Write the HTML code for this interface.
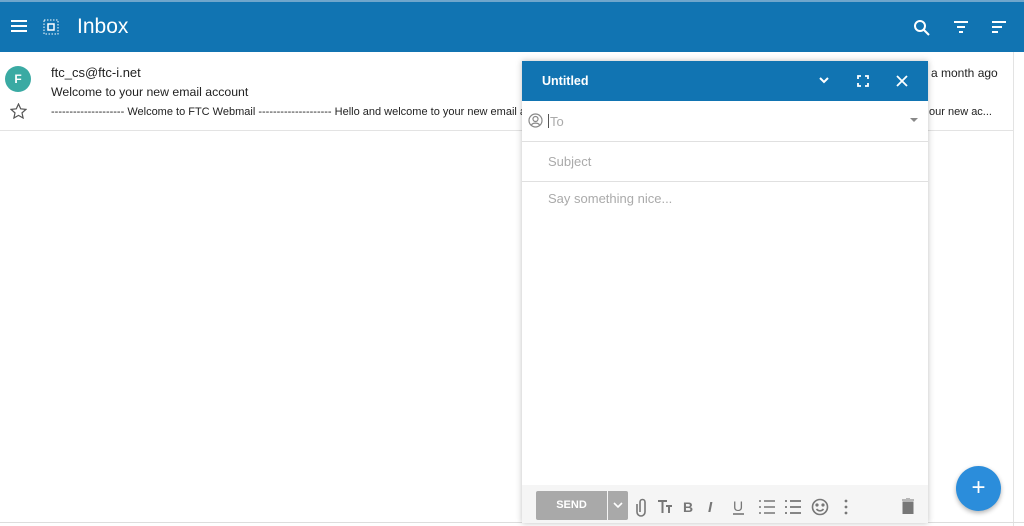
<!DOCTYPE html>
<html><head><style>
*{box-sizing:border-box;margin:0;padding:0}
body{width:1024px;height:526px;overflow:hidden;background:#fff;font-family:"Liberation Sans",sans-serif;position:relative}
.top{position:absolute;left:0;top:0;width:1024px;height:52px;background:#1174b2;border-top:2px solid #6fa6cc}
.abs{position:absolute}
.t{color:#222}
</style></head><body>
<div class="top">
 <svg class="abs" style="left:10px;top:17px" width="18" height="14"><path d="M1 2h16M1 7h16M1 12h16" stroke="#fff" stroke-width="2"/></svg>
 <svg class="abs" style="left:43px;top:17px" width="16" height="16"><rect x="1" y="1" width="14" height="14" fill="none" stroke="#fff" stroke-dasharray="1.5 1.5"/><rect x="5" y="5" width="6" height="6" fill="none" stroke="#fff" stroke-width="1.5"/></svg>
 <div class="abs" style="left:77px;top:13px;color:#fff;font-size:21px">Inbox</div>
 <svg class="abs" style="left:913px;top:17px" width="18" height="18"><circle cx="7" cy="7" r="5" fill="none" stroke="#fff" stroke-width="2"/><path d="M11 11l5 5" stroke="#fff" stroke-width="2"/></svg>
 <svg class="abs" style="left:953px;top:19px" width="16" height="12"><path d="M1 1h14M4 6h8M6 11h4" stroke="#fff" stroke-width="2"/></svg>
 <svg class="abs" style="left:991px;top:19px" width="16" height="12"><path d="M1 1h14M1 6h10M1 11h6" stroke="#fff" stroke-width="2"/></svg>
</div>
<div class="abs" style="left:5px;top:66px;width:26px;height:26px;border-radius:50%;background:#3aaaa3;color:#fff;font-size:12px;font-weight:bold;text-align:center;line-height:26px">F</div>
<svg class="abs" style="left:10px;top:103px" width="17" height="16"><path d="M8.5 1l2.2 4.8 5.2.6-3.9 3.5 1.1 5.1-4.6-2.6-4.6 2.6 1.1-5.1L1.1 6.4l5.2-.6z" fill="none" stroke="#555" stroke-width="1.2"/></svg>
<div class="abs t" style="left:51px;top:65px;font-size:13px">ftc_cs@ftc-i.net</div>
<div class="abs t" style="left:51px;top:85px;font-size:12.3px">Welcome to your new email account</div>
<div class="abs t" style="left:51px;top:106px;font-size:11px;white-space:nowrap">-------------------- Welcome to FTC Webmail -------------------- Hello and welcome to your new email a</div>
<div class="abs t" style="left:931px;top:66px;font-size:12px">a month ago</div>
<div class="abs t" style="left:929px;top:106px;font-size:11px">our new ac...</div>
<div class="abs" style="left:0;top:130px;width:1013px;height:1px;background:#e3e3e3"></div>
<div class="abs" style="left:1013px;top:52px;width:1px;height:474px;background:#e3e3e3"></div>
<div class="abs" style="left:0;top:522px;width:1024px;height:1px;background:#ddd"></div>

<div class="abs" style="left:522px;top:61px;width:406px;height:462px;background:#fff;box-shadow:0 0 6px rgba(0,0,0,.25)">
 <div class="abs" style="left:0;top:0;width:406px;height:40px;background:#1174b2"></div>
 <div class="abs" style="left:20px;top:13px;color:#fff;font-size:12.5px;font-weight:bold">Untitled</div>
 <svg class="abs" style="left:296px;top:14px" width="12" height="10"><path d="M2 3l4 4 4-4" stroke="#fff" stroke-width="2" fill="none"/></svg>
 <svg class="abs" style="left:335px;top:14px" width="12" height="12"><path d="M1 4V1h3M8 1h3v3M11 8v3H8M4 11H1V8" stroke="#fff" stroke-width="1.8" fill="none"/></svg>
 <svg class="abs" style="left:374px;top:14px" width="12" height="12"><path d="M1 1l10 10M11 1L1 11" stroke="#fff" stroke-width="1.8"/></svg>
 <svg class="abs" style="left:6px;top:52px" width="15" height="15"><circle cx="7.5" cy="7.5" r="6.5" fill="none" stroke="#888" stroke-width="1.2"/><circle cx="7.5" cy="6" r="2.5" fill="none" stroke="#888" stroke-width="1.2"/><path d="M3.5 12c1-2.5 7-2.5 8 0" stroke="#888" stroke-width="1.2" fill="none"/></svg>
 <div class="abs" style="left:26px;top:53px;width:1px;height:14px;background:#555"></div>
 <div class="abs" style="left:28px;top:53px;color:#aaa;font-size:13px">To</div>
 <div class="abs" style="left:388px;top:57px;border:4px solid transparent;border-top:4px solid #888"></div>
 <div class="abs" style="left:0;top:80px;width:406px;height:1px;background:#e0e0e0"></div>
 <div class="abs" style="left:26px;top:93px;color:#aaa;font-size:13px">Subject</div>
 <div class="abs" style="left:0;top:120px;width:406px;height:1px;background:#e0e0e0"></div>
 <div class="abs" style="left:26px;top:130px;color:#aaa;font-size:13px">Say something nice...</div>
 <div class="abs" style="left:0;top:424px;width:406px;height:38px;background:#f5f5f5"></div>
 <div class="abs" style="left:14px;top:430px;width:71px;height:29px;background:#a9a9a9;color:#fff;font-size:11px;font-weight:bold;text-align:center;line-height:29px;border-radius:2px 0 0 2px">SEND</div>
 <div class="abs" style="left:86px;top:430px;width:20px;height:29px;background:#a9a9a9;border-radius:0 2px 2px 0"><svg style="position:absolute;left:5px;top:11px" width="10" height="7"><path d="M1 1l4 4 4-4" stroke="#fff" stroke-width="1.6" fill="none"/></svg></div>
 <svg class="abs" style="left:112px;top:436px" width="300" height="20" fill="none" stroke="#777" stroke-width="1.6">
  <path d="M6 15V5a2.5 2.5 0 0 1 5 0v10a4 4 0 0 1-8 0V7"/>
  <path d="M24 4h9M28.5 4v12M32 9h6M35 9v7" stroke-width="2"/>
  <text x="49" y="15" font-family="Liberation Sans" font-weight="bold" font-size="14" fill="#777" stroke="none">B</text>
  <text x="74" y="15" font-family="Liberation Sans" font-weight="bold" font-style="italic" font-size="15" fill="#777" stroke="none">I</text>
  <text x="99" y="14" font-family="Liberation Sans" font-size="14" fill="#777" stroke="none">U</text>
  <path d="M99 17h11"/>
  <path d="M130 4h11M130 10h11M130 16h11M125 4h2M125 10h2M125 16h2" stroke-width="1.4"/>
  <path d="M156 4h11M156 10h11M156 16h11M151 4h2M151 10h2M151 16h2" stroke-width="1.8"/>
  <circle cx="186" cy="10" r="7.5"/><circle cx="183" cy="8" r=".8" fill="#777"/><circle cx="189" cy="8" r=".8" fill="#777"/><path d="M182.5 12c2 2.5 5 2.5 7 0"/>
  <circle cx="212" cy="4" r="1.4" fill="#777" stroke="none"/><circle cx="212" cy="10" r="1.4" fill="#777" stroke="none"/><circle cx="212" cy="16" r="1.4" fill="#777" stroke="none"/>
 </svg>
 <svg class="abs" style="left:380px;top:437px" width="12" height="16"><path d="M0 2h12M4 0h4M1 4h10v12H1z" fill="#777" stroke="#777"/></svg>
</div>
<div class="abs" style="left:956px;top:466px;width:45px;height:45px;border-radius:50%;background:#2b8ddb;box-shadow:0 2px 5px rgba(0,0,0,.3);color:#fff;font-size:24px;text-align:center;line-height:44px">+</div>
</body></html>
